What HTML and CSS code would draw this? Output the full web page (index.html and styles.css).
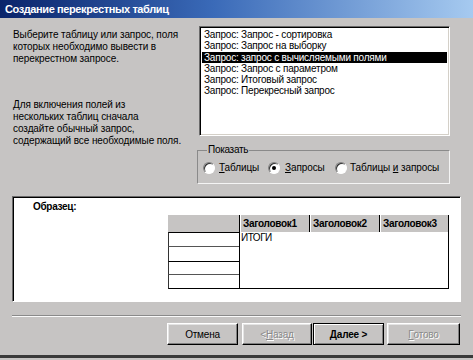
FILE: index.html
```html
<!DOCTYPE html>
<html lang="ru">
<head>
<meta charset="utf-8">
<link rel="stylesheet" href="styles.css">
</head>
<body>
<div class="win">
  <div class="title">Создание перекрестных таблиц</div>
  <div class="top">
    <div class="intro">
      <p class="p1">Выберите таблицу или запрос, поля<br>которых необходимо вывести в<br>перекрестном запросе.</p>
      <p class="p2">Для включения полей из<br>нескольких таблиц сначала<br>создайте обычный запрос,<br>содержащий все необходимые поля.</p>
    </div>
    <div class="side">
      <div class="list">
        <div class="item">Запрос: Запрос - сортировка</div>
        <div class="item">Запрос: Запрос на выборку</div>
        <div class="item sel">Запрос: запрос с вычисляемыми полями</div>
        <div class="item">Запрос: Запрос с параметром</div>
        <div class="item">Запрос: Итоговый запрос</div>
        <div class="item">Запрос: Перекресный запрос</div>
      </div>
      <fieldset class="group">
        <legend class="legend">Показать</legend>
        <div class="radios">
          <div class="radio r1"><span class="dot"></span><span><u>Т</u>аблицы</span></div>
          <div class="radio r2"><span class="dot on"></span><span><u>З</u>апросы</span></div>
          <div class="radio r3"><span class="dot"></span><span>Таблицы <u>и</u> запросы</span></div>
        </div>
      </fieldset>
    </div>
  </div>
  <div class="sample">
    <div class="sample-label">Образец:</div>
    <div class="grid">
      <div class="corner"></div>
      <div class="hcell">Заголовок1</div>
      <div class="hcell">Заголовок2</div>
      <div class="hcell last">Заголовок3</div>
      <div class="rcell rc1"></div>
      <div class="rcell rc2"></div>
      <div class="rcell rc3"></div>
      <div class="rcell rc4"></div>
      <div class="data">ИТОГИ</div>
    </div>
  </div>
  <div class="sep"></div>
  <div class="buttons">
    <div class="btn b-cancel">Отмена</div>
    <div class="btn b-back dis">&lt; <u>Н</u>азад</div>
    <div class="btn b-next def"><span><u>Д</u>алее &gt;</span></div>
    <div class="btn b-done dis"><u>Г</u>отово</div>
  </div>
  <div class="bottom"></div>
</div>
</body>
</html>
```

FILE: styles.css
```css
* { box-sizing: border-box; }
html, body { margin: 0; padding: 0; }
body {
  width: 473px;
  height: 360px;
  overflow: hidden;
  background: #c6c4c3;
  font-family: "Liberation Sans", Arial, sans-serif;
  font-size: 10px;
  letter-spacing: -0.2px;
  color: #000;
}
.win { width: 473px; height: 360px; display: flex; flex-direction: column; }
.title {
  height: 18px;
  line-height: 18px;
  padding-left: 5px;
  color: #fff;
  font-weight: bold;
  font-size: 11px;
  letter-spacing: -0.4px;
  white-space: nowrap;
  background: linear-gradient(to right, #0a246a 0%, #3a6ab8 45%, #a6caf0 100%);
}
.top { display: flex; height: 166px; }
.intro { width: 197px; padding-left: 13px; white-space: nowrap; letter-spacing: -0.1px; }
.intro p { margin: 0; line-height: 12px; }
.p1 { margin-top: 11px !important; }
.p2 { margin-top: 34px !important; }
.side { width: 253px; display: flex; flex-direction: column; }
.list {
  margin-top: 8px;
  margin-left: 2px;
  width: 251px;
  height: 110px;
  background: #fff;
  border: 1px solid;
  border-color: #6a6a6a #fff #fff #6a6a6a;
  box-shadow: inset 1px 1px 0 #000, inset -1px -1px 0 #d4d0c8;
  padding: 2px 2px 0 2px;
}
.item { height: 11.25px; line-height: 11px; padding-left: 2px; white-space: nowrap; }
.item.sel { background: #000; color: #fff; }
.group {
  margin: 8px 0 0 0;
  padding: 6px 0 9px 5px;
  border: 1px solid #8a8a8a;
  border-right-color: #f4f4f4;
  border-bottom-color: #f4f4f4;
  min-width: 0;
  height: 40px;
}
.legend { padding: 0 1px; margin-left: 4px; line-height: 12px; letter-spacing: -0.3px; }
.radios { display: flex; align-items: center; height: 12px; white-space: nowrap; letter-spacing: -0.1px; }
.radio { display: flex; align-items: center; gap: 4px; line-height: 12px; }
.r1 { width: 65px; }
.r2 { width: 67px; gap: 5px; }
.r3 { gap: 3px; }
.dot {
  flex: none;
  width: 12px;
  height: 12px;
  border-radius: 50%;
  background: #fff;
  border: 1px solid;
  border-color: #808080 #fff #fff #808080;
  box-shadow: inset 1px 1px 0 #303030;
  display: flex;
  align-items: center;
  justify-content: center;
}
.dot.on::after {
  content: "";
  width: 4px;
  height: 4px;
  border-radius: 50%;
  background: #000;
}
.sample {
  margin-left: 12px;
  margin-top: 12px;
  width: 449px;
  height: 106px;
  background: #fff;
  border: 1px solid;
  border-color: #6a6a6a #fff #fff #6a6a6a;
  box-shadow: inset 1px 1px 0 #000;
  padding: 4px 0 0 1px;
}
.sample-label { font-weight: bold; margin-left: 19px; line-height: 12px; letter-spacing: -0.3px; }
.grid {
  margin-top: 2px;
  margin-left: 154px;
  display: grid;
  grid-template-columns: 71px 70px 70px 70px;
  grid-template-rows: 17px 14px 15px 13px 15px;
  width: 281px;
}
.corner { grid-column: 1; grid-row: 1; background: #c6c4c3; }
.hcell {
  grid-row: 1;
  background: #c6c4c3;
  border-left: 1px solid #000;
  box-shadow: inset 1px 0 0 #fff;
  font-weight: bold;
  line-height: 17px;
  padding-left: 3px;
  letter-spacing: -0.3px;
  white-space: nowrap;
}
.hcell.last { border-right: 1px solid #000; }
.rcell {
  grid-column: 1;
  border-left: 1px solid #333;
  border-top: 1px solid #000;
  background: #fff;
}
.rc1 { grid-row: 2; }
.rc2 { grid-row: 3; border-top-color: #555; }
.rc3 { grid-row: 4; }
.rc4 { grid-row: 5; border-top-color: #555; border-bottom: 1px solid #000; }
.data {
  grid-column: 2 / 5;
  grid-row: 2 / 6;
  background: #fff;
  border-left: 1px solid #000;
  border-right: 1px solid #000;
  border-bottom: 1px solid #000;
  line-height: 12px;
  padding-left: 1px;
  letter-spacing: -0.5px;
}
.sep {
  margin-left: 12px;
  margin-top: 13px;
  width: 449px;
  height: 2px;
  border-top: 1px solid #8a8a8a;
  border-bottom: 1px solid #fafafa;
}
.buttons { display: flex; margin-top: 6px; padding-left: 167px; height: 22px; letter-spacing: -0.2px; }
.btn {
  height: 22px;
  width: 70px;
  display: flex;
  align-items: center;
  justify-content: center;
  border: 1px solid;
  border-color: #fff #000 #000 #fff;
  box-shadow: inset -1px -1px 0 #808080, inset 1px 1px 0 #e4e4e4;
  white-space: nowrap;
}
.b-cancel { width: 71px; }
.b-back { margin-left: 4px; }
.b-next { margin-left: 1px; width: 71px; }
.b-done { margin-left: 3px; width: 73px; }
.dis { color: #8a8a8a; text-shadow: 1px 1px 0 #fff; }
.def { font-weight: bold; border: 1px solid #000; box-shadow: inset 1px 1px 0 #fff, inset -1px -1px 0 #808080; }
.bottom { margin-top: 10px; height: 3px; background: #3a3a3a; }
```
